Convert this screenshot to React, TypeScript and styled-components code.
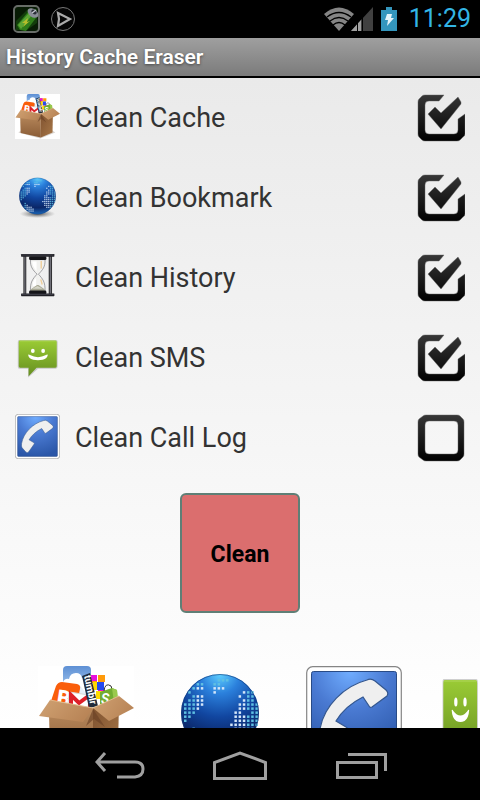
import React, { useId, useState } from "react";
import styled, { createGlobalStyle } from "styled-components";

const GlobalStyle = createGlobalStyle`
  *, *::before, *::after { box-sizing: border-box; }
  body { margin: 0; background: #000; font-family: Roboto, "Noto Sans", sans-serif; }
`;

const Screen = styled.div`
  display: flex;
  flex-direction: column;
  height: 100vh;
  overflow: hidden;
  background: #000;
`;

const StatusBar = styled.header`
  display: flex;
  flex: none;
  align-items: center;
  justify-content: space-between;
  height: 38px;
  padding: 0 9px 0 12px;
  background: #000;
`;

const StatusGroup = styled.div<{ $gap: number }>`
  display: flex;
  align-items: center;
  gap: ${(p) => p.$gap}px;
`;

const Clock = styled.time`
  margin-left: 4px;
  color: #33b5e5;
  font-size: 25px;
  line-height: 40px;
`;

const TitleBar = styled.h1`
  flex: none;
  margin: 0;
  padding: 0 6px;
  border-bottom: 2px solid #000;
  background: linear-gradient(#9f9f9f, #7b7b7b);
  color: #fff;
  font-size: 21px;
  font-weight: 600;
  line-height: 38px;
  text-shadow: 0 1px 3px rgba(0, 0, 0, 0.5);
`;

const Content = styled.main`
  display: flex;
  flex: 1;
  flex-direction: column;
  align-items: center;
  min-height: 0;
  overflow: hidden;
  background: linear-gradient(#eaeaea, #fff);
`;

const OptionList = styled.ul`
  width: 100%;
  margin: 0;
  padding: 0;
  list-style: none;
`;

const OptionRow = styled.label`
  display: flex;
  align-items: flex-start;
  height: 80px;
  padding: 16px 15px;
  gap: 15px;
  cursor: pointer;
`;

const OptionName = styled.span`
  flex: 1;
  color: #333;
  font-size: 27px;
  line-height: 48px;
`;

const CheckCell = styled.span`
  display: grid;
  width: 48px;
  height: 48px;

  > * { grid-area: 1 / 1; }
  > svg { pointer-events: none; }
`;

const CheckInput = styled.input`
  width: 48px;
  height: 48px;
  margin: 0;
  appearance: none;
  cursor: pointer;
`;

const CleanButton = styled.button`
  flex: none;
  width: 120px;
  height: 120px;
  margin-top: 15px;
  padding: 2px 0 0;
  border: 2px solid #5f7f76;
  border-radius: 6px;
  background: #db6e6e;
  color: #000;
  font-family: inherit;
  font-size: 23px;
  font-weight: 700;
  cursor: pointer;
`;

const Shelf = styled.nav`
  display: flex;
  flex: none;
  width: 100%;
  margin-top: 53px;
  padding-left: 38px;
  gap: 38px;
`;

const ShelfButton = styled.button<{ $fluid?: boolean }>`
  display: block;
  flex: ${(p) => (p.$fluid ? "1 1 0" : "none")};
  width: 96px;
  min-width: 0;
  max-width: 96px;
  height: 96px;
  padding: 0;
  border: 0;
  background: none;
  cursor: pointer;

  > svg { display: block; width: 100%; height: 100%; }
`;

const NavBar = styled.footer`
  display: flex;
  flex: none;
  justify-content: center;
  height: 72px;
  background: #000;
`;

const NavButton = styled.button`
  display: grid;
  place-items: center;
  width: 120px;
  padding: 4px 0 0;
  border: 0;
  background: none;
  cursor: pointer;
`;

type IconProps = { size?: number };

const frame = (size: number) => ({
  width: size,
  height: size,
  viewBox: "0 0 96 96",
  preserveAspectRatio: "none",
  "aria-hidden": true,
});

function BoxIcon({ size = 45 }: IconProps) {
  const id = useId();
  return (
    <svg {...frame(size)}>
      <defs>
        <linearGradient id={id + "l"} x2="0" y2="1">
          <stop offset="0" stopColor="#b98a5d" />
          <stop offset="1" stopColor="#8a5c36" />
        </linearGradient>
        <linearGradient id={id + "r"} x2="1" y2="1">
          <stop offset="0" stopColor="#7e512f" />
          <stop offset="1" stopColor="#a87848" />
        </linearGradient>
        <linearGradient id={id + "f"} x2="1" y2="0.4">
          <stop offset="0" stopColor="#d0a273" />
          <stop offset="1" stopColor="#b98557" />
        </linearGradient>
        <linearGradient id={id + "s"} x2="0" y2="1">
          <stop offset="0" stopColor="#5d8fd4" />
          <stop offset="1" stopColor="#b9d9f6" />
        </linearGradient>
      </defs>
      <path fill="#fff" d="M0 0h96v96H0z" />
      <path fill="#d9d4cf" d="M7 82l47 13 32-13-8-5-60-3z" />
      <rect x="25" y="0" width="28" height="30" rx="4" fill={`url(#${id}s)`} />
      <path fill="#fff" d="M25 23V16q2-4 6-3 1-6 7-6 5 0 6 5 6-2 9 4v12H27z" />
      <path fill="#e6f1fb" d="M27 25q1-6 7-5 6-5 10 2l6 8H28z" />
      <path fill="#ff9a0a" d="M53 9h6v8h-6zM60 9h7v7h-7z" />
      <path fill="#e80ddc" d="M53 9h6v6h-6zM60 24h7v9h-7z" />
      <path fill="#2449ef" d="M59 16h7v8h-7z" />
      <path fill="#ffd900" d="M55 16h4v8h-4zM58 25h7v8h-7z" />
      <path fill="#fa5e0b" d="M18 20q2-4 6-4l15 2q4 1 3 5l-4 19-26-4z" />
      <text x="18" y="38" fill="#fff" fontFamily="Roboto, sans-serif" fontSize="21" fontWeight="900" transform="rotate(9 18 38)">B</text>
      <path fill="#fff" stroke="#d9d9d9" d="M31 26l20 3-1 14-20-4z" />
      <path fill="none" stroke="#dd2029" strokeWidth="4" d="M33 42V29l8 8 11-8v12" />
      <path fill="#222c3c" d="M44 10l8-3 8 33-9 2z" />
      <text x="46" y="10" fill="#fff" fontFamily="Roboto, sans-serif" fontSize="10" fontWeight="700" transform="rotate(78 46 10)">tumblr</text>
      <path fill="none" stroke="#333" d="M66 25q1-9 7-5l2 6" />
      <path fill="#73ad32" d="M62 26l12-4 5 2 1 16-18 1z" />
      <path fill="#9ac94d" d="M74 22l5 2 1 10-4 3z" />
      <text x="63" y="38" fill="#fff" fontFamily="Roboto, sans-serif" fontSize="14" fontStyle="italic" fontWeight="700">S</text>
      <path fill={`url(#${id}l)`} d="M11 48l44-6v51L12 83z" />
      <path fill={`url(#${id}r)`} d="M55 42l26-6-1 46-25 11z" />
      <path fill="#6b4226" d="M55 43l-7 17 8-7 11 8z" opacity="0.65" />
      <path fill={`url(#${id}f)`} d="M12 34l43 8-10 14L1 50z" />
      <path fill={`url(#${id}f)`} d="M55 42l26-12 15 12-25 13z" />
      <path fill="none" stroke="#e0b98c" d="M12 34l43 8 26-12" />
    </svg>
  );
}

// Each entry lists the lit columns of one row of the dot grid.
const GLOBE_DOTS = [
  [8, 9, 10],
  [3, 4, 7, 8],
  [2, 3, 4, 7, 8, 9],
  [1, 7, 14, 15, 16],
  [2, 3, 4, 13, 15, 16],
  [1, 2, 3, 4, 14, 15, 16],
  [0, 1, 2, 3, 4, 13, 14, 15, 16, 17],
  [0, 1, 2, 3, 13, 14, 15, 16, 17],
  [0, 1, 2, 12, 13, 16, 17],
  [0, 1, 12, 13, 14, 15, 16, 17],
  [0, 12, 13, 14, 15, 16, 17],
  [11, 12, 13, 14, 15, 16, 17],
  [2, 12, 13, 14, 15, 16],
  [2, 3, 12, 13, 14, 15, 16],
  [2, 3, 4, 5, 13, 14, 15],
  [3, 4, 5, 6],
  [4, 5, 6],
];

function GlobeIcon({ size = 45 }: IconProps) {
  const id = useId();
  return (
    <svg {...frame(size)}>
      <defs>
        <radialGradient id={id + "g"} cx="0.5" cy="0" r="1">
          <stop offset="0" stopColor="#5fd0ff" />
          <stop offset="0.25" stopColor="#2b80dc" />
          <stop offset="0.55" stopColor="#1146a0" />
          <stop offset="0.82" stopColor="#0b2768" />
          <stop offset="1" stopColor="#1a66b8" />
        </radialGradient>
        <radialGradient id={id + "s"}>
          <stop offset="0" stopColor="#333" stopOpacity="0.9" />
          <stop offset="1" stopColor="#777" stopOpacity="0" />
        </radialGradient>
      </defs>
      <ellipse cx="48" cy="85" rx="38" ry="9" fill={`url(#${id}s)`} />
      <circle cx="48" cy="47" r="39" fill={`url(#${id}g)`} />
      {GLOBE_DOTS.map((cols, row) =>
        cols.map((col) => (
          <rect
            key={`${row}-${col}`}
            x={12 + col * 4.2}
            y={13 + row * 4.05}
            width="2.5"
            height="2.5"
            fill={col < 3 || col > 14 || row < 2 ? "#5fbfe2" : "#d3e6fa"}
          />
        )),
      )}
      <circle cx="48" cy="47" r="38.5" fill="none" stroke="#123a7a" strokeOpacity="0.6" />
    </svg>
  );
}

function HourglassIcon({ size = 45 }: IconProps) {
  const id = useId();
  return (
    <svg {...frame(size)}>
      <defs>
        <linearGradient id={id + "p"} x2="1" y2="0">
          <stop offset="0" stopColor="#111" />
          <stop offset="0.5" stopColor="#777780" />
          <stop offset="1" stopColor="#111" />
        </linearGradient>
      </defs>
      <rect x="18" y="4" width="6" height="82" fill={`url(#${id}p)`} />
      <rect x="72" y="4" width="7" height="82" fill={`url(#${id}p)`} />
      <path fill="#f1f1ef" stroke="#85858a" strokeWidth="1.6" d="M33 12c-1 15 5 22 14 31-9 10-15 17-14 36h31c1-19-5-26-14-36 9-9 15-16 14-31z" />
      <path fill="#fff" d="M37 16h9v20q-9-9-9-20zM38 62q2-8 7-11v17h-7z" />
      <path fill="none" stroke="#efcf9c" strokeWidth="3" d="M56 15v16M55 54l3 11" />
      <path fill="#a9a995" d="M34 75l13-9h3l13 9v4H34z" />
      <path fill="#d5d5c8" d="M37 74l11-6 11 6z" />
      <rect x="30" y="5" width="37" height="8" rx="3" fill="#141418" />
      <rect x="30" y="78" width="37" height="8" rx="3" fill="#141418" />
      <rect x="13" y="0" width="71" height="6" rx="1" fill="#202026" />
      <rect x="13" y="84" width="71" height="6" rx="1" fill="#202026" />
      <path stroke="#6c6c78" d="M15 2h67M15 86h67" />
    </svg>
  );
}

function MessageIcon({ size = 45 }: IconProps) {
  const id = useId();
  return (
    <svg {...frame(size)}>
      <defs>
        <linearGradient id={id + "m"} x2="0" y2="1">
          <stop offset="0" stopColor="#9acb35" />
          <stop offset="1" stopColor="#668f20" />
        </linearGradient>
      </defs>
      <path fill="#777" opacity="0.35" d="M9 13h78q4 0 4 4v52q0 5-4 5H49L28 93V74H9q-3 0-3-4V17q0-4 3-4z" />
      <path fill={`url(#${id}m)`} d="M11 14h75q3 0 3 3v52q0 3-3 3H46L29 90V72H11q-3 0-3-3V17q0-3 3-3z" />
      <path stroke="#b9dd6d" d="M10 15h77" />
      <ellipse cx="38" cy="36" rx="4" ry="4.5" fill="#fff" />
      <ellipse cx="60" cy="36" rx="4" ry="4.5" fill="#fff" />
      <path fill="#fff" d="M28 44q2-1 4 1 17 9 34 0 2-2 4-1-1 8-11 11-10 2-20 0-10-3-11-11z" />
    </svg>
  );
}

function PhoneIcon({ size = 45 }: IconProps) {
  const id = useId();
  return (
    <svg {...frame(size)}>
      <defs>
        <radialGradient id={id + "c"} cx="0.45" cy="0" r="1">
          <stop offset="0" stopColor="#70adff" />
          <stop offset="0.45" stopColor="#4a7ad2" />
          <stop offset="1" stopColor="#2b57a8" />
        </radialGradient>
      </defs>
      <rect x="0.7" y="0.7" width="94.6" height="94.6" rx="6" fill="#fff" stroke="#858585" strokeWidth="1.2" />
      <rect x="5.5" y="5.5" width="85" height="85" rx="2" fill={`url(#${id}c)`} stroke="#294b86" />
      <path
        fill="#efefef"
        stroke="#34578f"
        strokeWidth="1.2"
        d="M61 14q4-2 8 1l11 9q3 3 1 6L66 41q-2 1-3-1l-6-9C45 37 36 45 30 55l10 6q2 1 1 3L29 81q-3 3-6 0l-8-9q-2-3-1-9C18 40 38 20 61 14z"
      />
    </svg>
  );
}

function CheckMark({ checked }: { checked: boolean }) {
  const id = useId();
  return (
    <svg width="48" height="48" viewBox="0 0 48 48" aria-hidden>
      <defs>
        <linearGradient id={id} x1="0" y1="0" x2="0" y2="48" gradientUnits="userSpaceOnUse">
          <stop offset="0" stopColor="#383838" />
          <stop offset="0.6" stopColor="#161616" />
          <stop offset="1" stopColor="#000" />
        </linearGradient>
      </defs>
      <g fill={`url(#${id})`} stroke="#666" strokeOpacity="0.45" strokeWidth="1" strokeLinejoin="round">
        {checked ? (
          <>
            <path d="M27 1l-5 6H12q-4 0-4 4v25q0 4 4 4h25q4 0 4-4V25l7-5v20q0 2-2 3l-3 3q-1 1-3 1H8q-2 0-3-1l-3-3q-1-1-1-3V8q0-2 1-3l3-3q1-1 3-1z" />
            <path d="M11 20l7-7 6 6L41 3l3 5v2L24 35z" />
          </>
        ) : (
          <path
            fillRule="evenodd"
            d="M9 1h31q2 0 3 1l3 3q1 1 1 3v32q0 2-1 3l-3 3q-1 1-3 1H9q-2 0-3-1l-4-3q-1-1-1-3V8q0-2 1-3l4-3q1-1 3-1zM12 7q-4 0-4 4v25q0 4 4 4h25q4 0 4-4V11q0-4-4-4z"
          />
        )}
      </g>
    </svg>
  );
}

function StatusAppIcons() {
  return (
    <>
      <svg width="28" height="28" viewBox="0 0 28 28" aria-hidden>
        <rect x="2" y="1" width="25" height="26" rx="4" fill="#081b05" stroke="#686c68" strokeWidth="2" />
        <path fill="#123d0b" d="M4 16L16 4h9v14L15 25H4z" />
        <path fill="#2f7d1a" d="M5 20L16 7l8 6-10 13-6-1z" />
        <path fill="#5ba535" d="M6 20L17 8l3 2-11 14z" />
        <path fill="#b5bd2b" d="M10 18l6-5-1 4 3-1-7 6 2-4z" />
        <ellipse cx="21" cy="8" rx="6" ry="4" fill="#8a8e97" transform="rotate(38 21 8)" />
        <ellipse cx="22" cy="7" rx="3" ry="2" fill="#292d36" transform="rotate(38 22 7)" />
        <path stroke="#c2c4cc" strokeWidth="1.5" d="M20 8l4-3" />
      </svg>
      <svg width="26" height="26" viewBox="0 0 26 26" aria-hidden>
        <circle cx="13" cy="13" r="11.5" fill="#050505" stroke="#777" />
        <path fill="none" stroke="#aaa" strokeWidth="2.2" d="M8 7l12 6-12 7 1-7z" />
      </svg>
    </>
  );
}

function StatusSystemIcons() {
  return (
    <>
      <svg width="49" height="24" viewBox="0 0 49 24" aria-hidden>
        <path fill="#858585" d="M0 7Q15-6 30 7L15 24z" />
        <path fill="none" stroke="#000" strokeWidth="1.3" d="M3 10q12-9 24 0M6 14q9-7 18 0M9 18q6-5 12 0" />
        <path fill="#404040" d="M49 0v24H27z" />
        <path fill="#a0a0a0" d="M37 13v11H27z" />
        <path stroke="#000" d="M33.500 15v9M38.500 11v13" />
      </svg>
      <svg width="16" height="24" viewBox="0 0 16 24" aria-hidden>
        <path fill="#3496bd" d="M5 0h6v3h5v21H0V3h5z" />
        <path fill="#e4f4fa" d="M6 7h5l-1 4h3l-7 8 1-6H4z" />
      </svg>
    </>
  );
}

const BackIcon = () => (
  <svg width="50" height="28" viewBox="0 0 50 28" fill="none" stroke="#a0a0a0" strokeWidth="3" aria-hidden>
    <path d="M10 1L2 10l8 9M3 10h37q8 0 8 7t-8 8H22" />
  </svg>
);

const HomeIcon = () => (
  <svg width="54" height="30" viewBox="0 0 54 30" fill="none" stroke="#a0a0a0" strokeWidth="3" aria-hidden>
    <path d="M1.500 27.500v-16L27 2l25.500 9.500v16z" />
  </svg>
);

const RecentIcon = () => (
  <svg width="56" height="28" viewBox="0 0 56 28" fill="none" stroke="#a0a0a0" strokeWidth="3" aria-hidden>
    <path d="M5.500 10.500h39v15h-39zM16 2.500h37.500V19" />
  </svg>
);

const OPTIONS = [
  { name: "Clean Cache", Icon: BoxIcon, checked: true },
  { name: "Clean Bookmark", Icon: GlobeIcon, checked: true },
  { name: "Clean History", Icon: HourglassIcon, checked: true },
  { name: "Clean SMS", Icon: MessageIcon, checked: true },
  { name: "Clean Call Log", Icon: PhoneIcon, checked: false },
];

export default function App() {
  const [checks, setChecks] = useState(OPTIONS.map((o) => o.checked));
  const toggle = (index: number) => setChecks((prev) => prev.map((c, i) => (i === index ? !c : c)));

  return (
    <>
      <GlobalStyle />
      <Screen>
        <StatusBar>
          <StatusGroup $gap={10}>
            <StatusAppIcons />
          </StatusGroup>
          <StatusGroup $gap={8}>
            <StatusSystemIcons />
            <Clock>11:29</Clock>
          </StatusGroup>
        </StatusBar>
        <TitleBar>History Cache Eraser</TitleBar>
        <Content>
          <OptionList>
            {OPTIONS.map(({ name, Icon }, i) => (
              <li key={name}>
                <OptionRow>
                  <Icon />
                  <OptionName>{name}</OptionName>
                  <CheckCell>
                    <CheckInput type="checkbox" checked={checks[i]} onChange={() => toggle(i)} />
                    <CheckMark checked={checks[i]} />
                  </CheckCell>
                </OptionRow>
              </li>
            ))}
          </OptionList>
          <CleanButton type="button">Clean</CleanButton>
          <Shelf aria-label="Shortcuts">
            <ShelfButton type="button" aria-label="Cache">
              <BoxIcon size={96} />
            </ShelfButton>
            <ShelfButton type="button" aria-label="Bookmarks">
              <GlobeIcon size={96} />
            </ShelfButton>
            <ShelfButton type="button" aria-label="Call log">
              <PhoneIcon size={96} />
            </ShelfButton>
            <ShelfButton type="button" aria-label="SMS" $fluid>
              <MessageIcon size={96} />
            </ShelfButton>
          </Shelf>
        </Content>
        <NavBar>
          <NavButton type="button" aria-label="Back">
            <BackIcon />
          </NavButton>
          <NavButton type="button" aria-label="Home">
            <HomeIcon />
          </NavButton>
          <NavButton type="button" aria-label="Recent apps">
            <RecentIcon />
          </NavButton>
        </NavBar>
      </Screen>
    </>
  );
}
